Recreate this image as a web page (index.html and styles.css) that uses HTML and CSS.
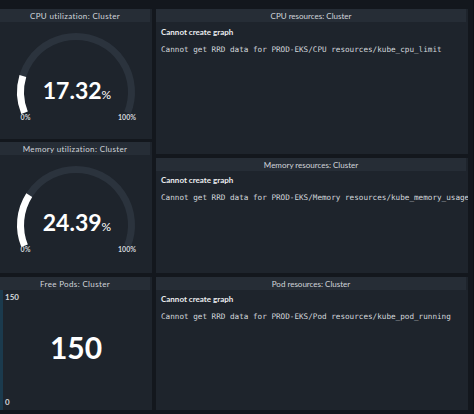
FILE: index.html
```html
<!DOCTYPE html>
<html>
<head>
<meta charset="utf-8">
<link rel="stylesheet" href="styles.css">
</head>
<body>
<div class="dashboard">
  <div class="col col-left">
    <section class="panel p-cpu">
      <div class="title">CPU utilization: Cluster</div>
      <svg class="gauge" viewBox="0 0 152 117" width="152" height="117">
        <path class="track" d="M 24.55 90.79 A 55.5 55.5 0 1 1 127.45 90.79"/>
        <path class="value" d="M 24.55 90.79 A 55.5 55.5 0 0 1 22.87 53.96"/>
        <text class="num" x="77" y="77" text-anchor="middle">17.32<tspan class="pct">%</tspan></text>
        <text class="lbl" x="25.5" y="98" text-anchor="middle">0%</text>
        <text class="lbl" x="127" y="98" text-anchor="middle">100%</text>
      </svg>
    </section>
    <section class="panel p-mem">
      <div class="title">Memory utilization: Cluster</div>
      <svg class="gauge" viewBox="0 0 152 117" width="152" height="117">
        <path class="track" d="M 24.55 90.79 A 55.5 55.5 0 1 1 127.45 90.79"/>
        <path class="value" d="M 24.55 90.79 A 55.5 55.5 0 0 1 29.26 40.07"/>
        <text class="num" x="77" y="76" text-anchor="middle">24.39<tspan class="pct">%</tspan></text>
        <text class="lbl" x="25.5" y="97" text-anchor="middle">0%</text>
        <text class="lbl" x="127" y="97" text-anchor="middle">100%</text>
      </svg>
    </section>
    <section class="panel p-pods">
      <div class="title">Free Pods: Cluster</div>
      <div class="single">
        <div class="axis">150</div>
        <div class="big">150</div>
        <div class="axis">0</div>
      </div>
    </section>
  </div>
  <div class="col col-right">
    <section class="panel r1">
      <div class="title">CPU resources: Cluster</div>
      <div class="err">
        <div class="err-head">Cannot create graph</div>
        <div class="err-msg">Cannot get RRD data for PROD-EKS/CPU resources/kube_cpu_limit</div>
      </div>
    </section>
    <section class="panel r2">
      <div class="title">Memory resources: Cluster</div>
      <div class="err">
        <div class="err-head">Cannot create graph</div>
        <div class="err-msg">Cannot get RRD data for PROD-EKS/Memory resources/kube_memory_usage</div>
      </div>
    </section>
    <section class="panel r3">
      <div class="title">Pod resources: Cluster</div>
      <div class="err">
        <div class="err-head">Cannot create graph</div>
        <div class="err-msg">Cannot get RRD data for PROD-EKS/Pod resources/kube_pod_running</div>
      </div>
    </section>
  </div>
  <div class="scroll"></div>
</div>
</body>
</html>
```
FILE: styles.css
```css
html, body {
  margin: 0;
  padding: 0;
  background: #13171d;
  width: 474px;
  height: 414px;
  overflow: hidden;
  font-family: "Lato", "Noto Sans", sans-serif;
}
.dashboard {
  display: flex;
  gap: 4px;
  padding-top: 9px;
  height: 414px;
  box-sizing: border-box;
}
.col {
  display: flex;
  flex-direction: column;
}
.col-left { width: 152px; }
.col-right { width: 312px; }
.scroll {
  width: 5px;
  margin-left: 1px;
  margin-top: -9px;
  background: #0e1116;
}
.panel {
  background: #1e242c;
  overflow: hidden;
  display: flex;
  flex-direction: column;
}
.p-cpu { height: 130px; }
.p-mem { height: 131px; margin-top: 3px; }
.p-pods { height: 133px; margin-top: 4px; }
.r1 { height: 145px; }
.r2 { height: 115px; margin-top: 4px; }
.r3 { height: 133px; margin-top: 4px; }

.title {
  height: 13px;
  line-height: 14px;
  flex: none;
  background: #262d36;
  color: #d2d6db;
  font-size: 8px;
  text-align: center;
}
.col-left .title { margin-right: 2px; letter-spacing: 0.35px; }
.col-right .title { margin-right: 2px; }

.gauge { display: block; }
.track { fill: none; stroke: #2b333d; stroke-width: 7; }
.value { fill: none; stroke: #ffffff; stroke-width: 7; }
.num {
  fill: #ffffff;
  font-family: "Lato", sans-serif;
  font-weight: 700;
  font-size: 23px;
}
.pct { font-size: 12px; font-weight: 400; }
.lbl {
  fill: #d3d7dc;
  font-family: "Lato", sans-serif;
  font-weight: 700;
  font-size: 7px;
}

.single {
  flex: 1;
  display: flex;
  flex-direction: column;
  border-left: 3px solid #1b3a4d;
  padding: 2px 0 3px 2px;
}
.axis {
  color: #d3d7dc;
  font-size: 8px;
  font-weight: 700;
  line-height: 10px;
}
.big {
  flex: 1;
  display: flex;
  align-items: center;
  justify-content: center;
  margin-left: -5px;
  margin-bottom: 5px;
  color: #ffffff;
  font-size: 30px;
  font-weight: 700;
}

.err {
  padding: 5px 5px 0 5px;
}
.r2 .err { padding-top: 4px; }
.r3 .err { padding-top: 4px; }
.err-head {
  color: #eceef0;
  font-size: 8px;
  font-weight: 700;
  line-height: 11px;
}
.err-msg {
  margin-top: 6px;
  color: #d3d7dc;
  font-family: "DejaVu Sans Mono", monospace;
  font-size: 7.65px;
  line-height: 11px;
  white-space: nowrap;
}
```
